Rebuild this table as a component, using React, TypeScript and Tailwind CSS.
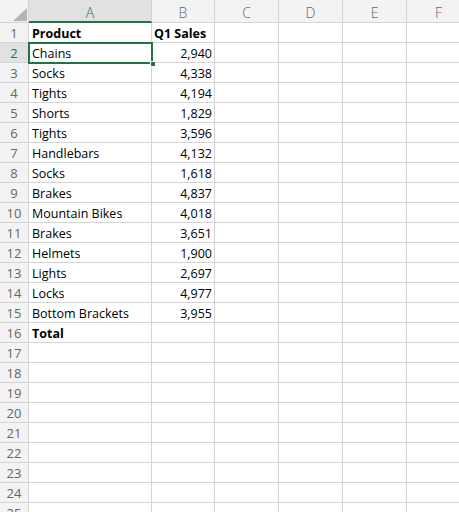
import React from "react";

const rows: [string, string, boolean?][] = [
  ["Product", "Q1 Sales", true],
  ["Chains", "2,940"],
  ["Socks", "4,338"],
  ["Tights", "4,194"],
  ["Shorts", "1,829"],
  ["Tights", "3,596"],
  ["Handlebars", "4,132"],
  ["Socks", "1,618"],
  ["Brakes", "4,837"],
  ["Mountain Bikes", "4,018"],
  ["Brakes", "3,651"],
  ["Helmets", "1,900"],
  ["Lights", "2,697"],
  ["Locks", "4,977"],
  ["Bottom Brackets", "3,955"],
  ["Total", "", true],
];

const all: [string, string, boolean?][] = [...rows];
while (all.length < 25) all.push(["", ""]);

const cellFont = { fontFamily: '"Open Sans", "Noto Sans", sans-serif' };

export default function App() {
  return (
    <div className="relative w-[459px] h-[512px] overflow-hidden bg-white" style={cellFont}>
      {/* header row */}
      <div className="flex h-[23px] bg-[#f3f3f3]">
        <div className="relative w-[29px] shrink-0 border-r border-b border-[#d4d4d4]">
          <svg className="absolute left-[13px] top-[8px]" width="14" height="13" viewBox="0 0 14 13">
            <polygon points="14,0 14,13 0,13" fill="#b5b5b5" />
          </svg>
        </div>
        <div className="w-[123px] shrink-0 bg-[#e1e1e1] border-r border-[#d4d4d4] border-b-2 border-b-[#217346] flex items-center justify-center pt-[3px] text-[14px] font-light text-[#217346]">
          A
        </div>
        {[
          ["B", "w-[63px]"],
          ["C", "w-[64px]"],
          ["D", "w-[64px]"],
          ["E", "w-[64px]"],
          ["F", "w-[64px]"],
        ].map(([l, w]) => (
          <div
            key={l}
            className={`${w} shrink-0 border-r border-b border-[#d4d4d4] flex items-center justify-center pt-[3px] text-[14px] font-light text-[#666666]`}
          >
            {l}
          </div>
        ))}
      </div>
      {all.map(([a, b, bold], i) => {
        const sel = i === 1;
        return (
          <div key={i} className="flex h-[20px]">
            <div
              className={`w-[29px] shrink-0 border-r border-b border-[#d4d4d4] flex items-center justify-center pt-[3px] text-[13px] ${
                sel ? "bg-[#e1e1e1] text-[#217346]" : "bg-[#f3f3f3] text-[#666666]"
              }`}
            >
              {i + 1}
            </div>
            <div
              className={`w-[123px] shrink-0 border-r border-b border-[#d4d4d4] flex items-center pt-[4px] pl-[3px] text-[12.5px] text-black ${
                bold ? "font-bold" : ""
              } whitespace-nowrap`}
            >
              {a}
            </div>
            <div
              className={`w-[63px] shrink-0 border-r border-b border-[#d4d4d4] flex items-center pt-[4px] ${
                bold ? "justify-start pl-[2px] font-bold" : "justify-end pr-[2px]"
              } text-[12.5px] text-black whitespace-nowrap`}
            >
              {b}
            </div>
            <div className="w-[64px] shrink-0 border-r border-b border-[#d4d4d4]" />
            <div className="w-[64px] shrink-0 border-r border-b border-[#d4d4d4]" />
            <div className="w-[64px] shrink-0 border-r border-b border-[#d4d4d4]" />
            <div className="w-[64px] shrink-0 border-r border-b border-[#d4d4d4]" />
          </div>
        );
      })}
      {/* selection */}
      <div className="absolute left-[28px] top-[42px] w-[125px] h-[22px] border-2 border-[#217346] pointer-events-none" />
      <div className="absolute left-[150px] top-[61px] w-[6px] h-[6px] bg-[#217346] border border-white" />
    </div>
  );
}
